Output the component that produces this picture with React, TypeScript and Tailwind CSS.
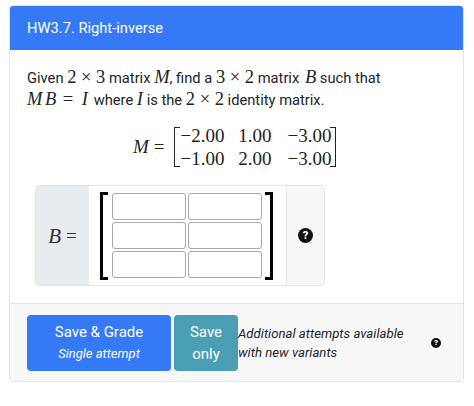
const sans = 'font-["Roboto","Liberation_Sans",sans-serif]';

function Var({ children }: { children: string }) {
  return <span className='font-["Liberation_Serif",serif] text-[18.5px] italic leading-none'>{children}</span>;
}

function Num({ children }: { children: string }) {
  return <span className='font-["Liberation_Serif",serif] text-[18.5px] leading-none'>{children}</span>;
}

function Help() {
  return (
    <span className="flex h-[15px] w-[15px] items-center justify-center rounded-full bg-[#111] text-[11px] font-black leading-none text-white">?</span>
  );
}

const mRows = [
  ['−2.00', '1.00', '−3.00'],
  ['−1.00', '2.00', '−3.00'],
];

function MatrixM() {
  return (
    <div className='mt-[16px] flex items-center pl-[106px] font-["Liberation_Serif",serif] text-[19px] text-[#222]'>
      <span className="italic">M</span>
      <span className="ml-[5px] mr-[9px]">=</span>
      <div className="relative flex h-[40px] w-[162px] flex-col justify-between border-x border-[#222] px-[3px]">
        <span className="absolute left-0 top-0 h-px w-[5px] bg-[#222]" />
        <span className="absolute bottom-0 left-0 h-px w-[5px] bg-[#222]" />
        <span className="absolute right-0 top-0 h-px w-[5px] bg-[#222]" />
        <span className="absolute bottom-0 right-0 h-px w-[5px] bg-[#222]" />
        {mRows.map((row) => (
          <div key={row[0]} className="grid grid-cols-[47px_47px_1fr] text-right leading-[17px]">
            {row.map((cell, i) => (
              <span key={i}>{cell}</span>
            ))}
          </div>
        ))}
      </div>
    </div>
  );
}

function BracketSide({ side }: { side: 'left' | 'right' }) {
  return (
    <div className={`h-[88px] w-[8px] border-y-[3px] border-black ${side === 'left' ? 'border-l-[3px]' : 'border-r-[3px]'}`} />
  );
}

function AnswerGroup() {
  return (
    <div className="ml-[8px] mt-[18px] flex h-[101px] w-[290px] overflow-hidden rounded-[4px] border border-[#e3e5e8]">
      <div className='flex w-[53px] items-center justify-center bg-[#e9ecef] font-["Liberation_Serif",serif] text-[#333]'>
        <span className="text-[21px] italic">B</span>
        <span className="ml-[5px] text-[19px]">=</span>
      </div>
      <div className="flex w-[198px] items-center gap-[3px] border-r border-[#e3e5e8] bg-white pl-[11px]">
        <BracketSide side="left" />
        <div className="grid grid-cols-[74px_74px] gap-[2px] pl-[1px]">
          {Array.from({ length: 6 }).map((_, i) => (
            <div key={i} className="h-[27px] rounded-[3px] border border-[#a9a9a9] bg-white" />
          ))}
        </div>
        <BracketSide side="right" />
      </div>
      <div className="flex flex-1 items-center justify-center bg-[#f7f7f8]">
        <Help />
      </div>
    </div>
  );
}

export default function App() {
  return (
    <div className={`h-[406px] w-[474px] bg-white pl-[9px] pt-[5px] ${sans}`}>
      <section className="flex h-[377px] w-[455px] flex-col overflow-hidden rounded-[4px] border border-[#e2e3e5]">
        <header className="flex h-[44px] flex-none items-center bg-[#3579f6] pl-[17px] text-[14.7px] text-white">
          HW3.7. Right-inverse
        </header>
        <div className="flex-1 bg-white pl-[17px] pt-[17px] text-[14.7px] leading-[22px] text-[#212529]">
          <p className="whitespace-nowrap">
            Given <Num>2 × 3</Num> matrix <Var>M</Var>, find a <Num>3 × 2</Num> matrix <span className="ml-[2px]"><Var>B</Var></span> such that
          </p>
          <p className="whitespace-nowrap">
            <span className="tracking-[2.5px]"><Var>MB</Var></span>
            <span className="ml-[4px] mr-[5px]"><Num>=</Num></span> <Var>I</Var> <span className="ml-[2px]">where</span> <Var>I</Var> is the <Num>2 × 2</Num> identity matrix.
          </p>
          <MatrixM />
          <AnswerGroup />
        </div>
        <footer className="flex h-[78px] flex-none items-center border-t border-[#e2e3e5] bg-[#f7f7f7] pl-[17px] text-white">
          <div className="flex h-[56px] w-[144px] flex-col items-center justify-center rounded-[4px] bg-[#3579f6]">
            <span className="text-[15px] leading-[22px]">Save &amp; Grade</span>
            <span className="text-[13px] italic leading-[22px]">Single attempt</span>
          </div>
          <div className="ml-[3px] flex h-[56px] w-[64px] flex-col items-center justify-center rounded-[4px] bg-[#4a9fb5] text-[15px] leading-[22px]">
            <span>Save</span>
            <span>only</span>
          </div>
          <p className="w-[180px] whitespace-nowrap text-[13.2px] italic leading-[19px] text-[#212529]">
            Additional attempts available
            <br />
            with new variants
          </p>
          <span className="ml-[13px] flex">
            <span className="flex h-[10px] w-[10px] items-center justify-center rounded-full bg-[#111] text-[8px] font-black leading-none text-white">?</span>
          </span>
        </footer>
      </section>
    </div>
  );
}
